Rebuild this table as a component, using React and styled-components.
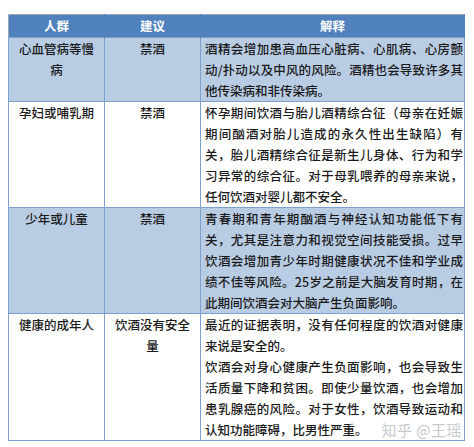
import styled, { createGlobalStyle } from "styled-components";

const GlobalStyle = createGlobalStyle`
    html, body {
        margin: 0;
        background: #ffffff;
    }
    body {
        font-family: "Noto Sans CJK SC", "Liberation Sans", sans-serif;
    }
`;

const Page = styled.div`
    padding: 14px 0 0 8px;
    width: 474px;
    height: 447px;
    box-sizing: border-box;
`;

const Wrap = styled.div`
    position: relative;
    width: 457px;
`;

const Table = styled.table`
    width: 457px;
    border-collapse: collapse;
    table-layout: fixed;
    border: 1px solid #9aa8b8;
    font-size: 12.5px;
    color: #1a1a1a;
`;

const HeadCell = styled.th`
    background: #4f81bd;
    color: #ffffff;
    font-weight: 700;
    height: 22px;
    padding: 0;
    text-align: center;
    border-right: 1px solid #4f81bd;
    line-height: 22px;
`;

const Row = styled.tr`
    background: ${p => (p.$shaded ? "#b8cce4" : "#ffffff")};
`;

const Cell = styled.td`
    vertical-align: top;
    padding: ${p => (p.$justify ? "0 1px 0 4px" : "0 5px")};
    line-height: 21px;
    border: 1px solid #7ea1cb;
    text-align: ${p => (p.$justify ? "justify" : "center")};
    text-autospace: no-autospace;
    font-weight: 500;
`;

const Para = styled.p`
    margin: 0;
`;

const Watermark = styled.div`
    position: absolute;
    right: 3px;
    bottom: 3px;
    color: #c6cacd;
    font-size: 15px;
    line-height: 16px;
    font-family: "Noto Sans CJK SC", sans-serif;
    letter-spacing: 0.5px;
`;

const rows = [
    {
        group: "心血管病等慢病",
        advice: "禁酒",
        text: ["酒精会增加患高血压心脏病、心肌病、心房颤动/扑动以及中风的风险。酒精也会导致许多其他传染病和非传染病。"],
    },
    {
        group: "孕妇或哺乳期",
        advice: "禁酒",
        text: ["怀孕期间饮酒与胎儿酒精综合征（母亲在妊娠期间酗酒对胎儿造成的永久性出生缺陷）有关，胎儿酒精综合征是新生儿身体、行为和学习异常的综合征。对于母乳喂养的母亲来说，任何饮酒对婴儿都不安全。"],
    },
    {
        group: "少年或儿童",
        advice: "禁酒",
        text: ["青春期和青年期酗酒与神经认知功能低下有关，尤其是注意力和视觉空间技能受损。过早饮酒会增加青少年时期健康状况不佳和学业成绩不佳等风险。25岁之前是大脑发育时期，在此期间饮酒会对大脑产生负面影响。"],
    },
    {
        group: "健康的成年人",
        advice: "饮酒没有安全量",
        text: [
            "最近的证据表明，没有任何程度的饮酒对健康来说是安全的。",
            "饮酒会对身心健康产生负面影响，也会导致生活质量下降和贫困。即使少量饮酒，也会增加患乳腺癌的风险。对于女性，饮酒导致运动和认知功能障碍，比男性严重。",
        ],
    },
];

const App = () => {
    return (
        <Page>
            <GlobalStyle />
            <Wrap>
                <Table>
                    <colgroup>
                        <col style={{ width: 96 }} />
                        <col style={{ width: 96 }} />
                        <col />
                    </colgroup>
                    <thead>
                        <tr>
                            <HeadCell>人群</HeadCell>
                            <HeadCell>建议</HeadCell>
                            <HeadCell>解释</HeadCell>
                        </tr>
                    </thead>
                    <tbody>
                        {rows.map((r, i) => (
                            <Row key={r.group} $shaded={i % 2 === 0}>
                                <Cell>{r.group}</Cell>
                                <Cell>{r.advice}</Cell>
                                <Cell $justify>
                                    {r.text.map((t, j) => <Para key={j}>{t}</Para>)}
                                </Cell>
                            </Row>
                        ))}
                    </tbody>
                </Table>
                <Watermark>知乎 @王瑶</Watermark>
            </Wrap>
        </Page>
    );
};

export default App;
